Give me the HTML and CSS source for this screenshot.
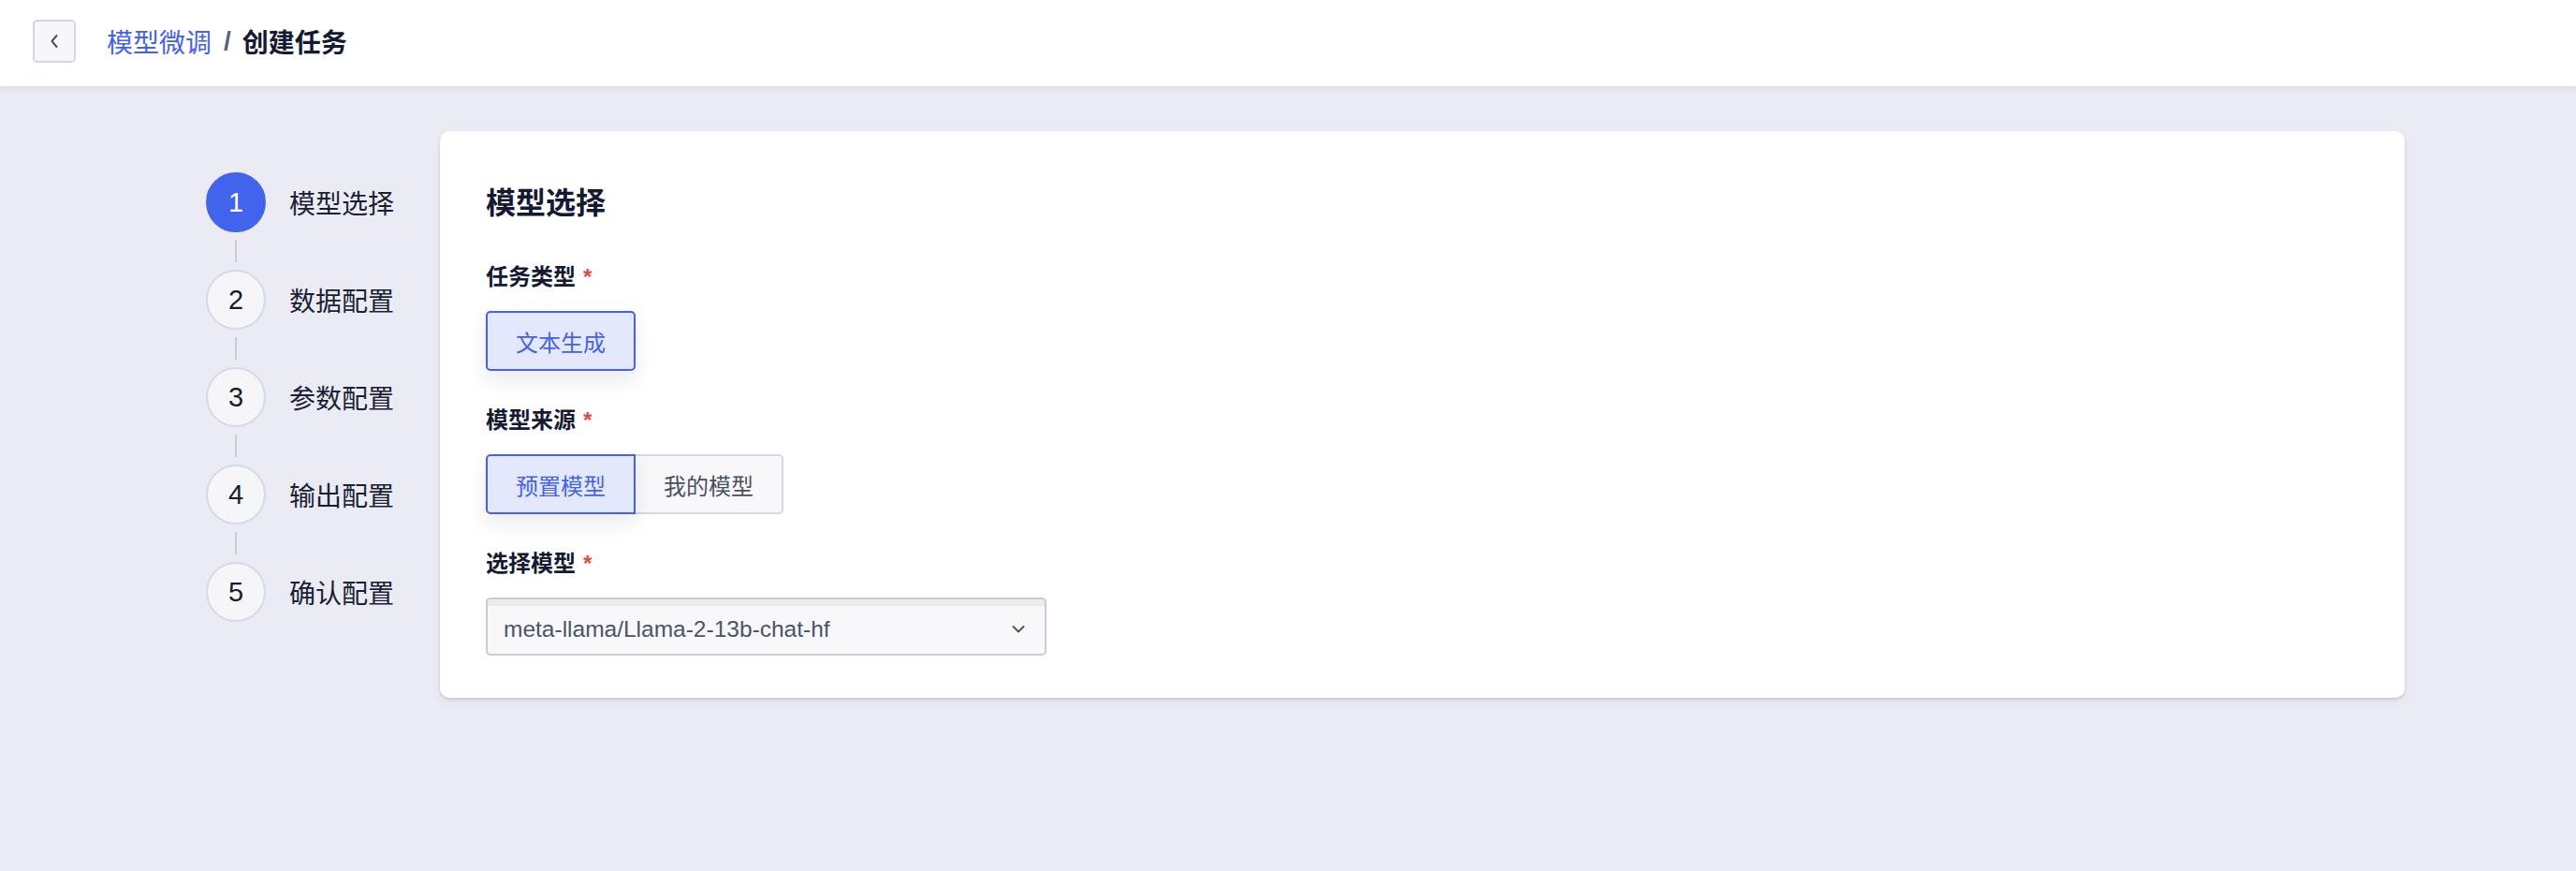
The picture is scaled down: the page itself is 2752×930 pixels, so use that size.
FILE: index.html
```html
<!DOCTYPE html>
<html lang="zh-CN">
<head>
    <meta charset="UTF-8">
    <meta name="viewport" content="width=device-width, initial-scale=1.0">
    <title>创建任务 - 模型微调</title>
    <link rel="stylesheet" href="styles.css">
</head>
<body>
    <div class="header">
        <button class="back-btn" type="button">
            <svg width="10" height="16" viewBox="0 0 10 16">
                <path d="M7.5 2 L2.5 8 L7.5 14" fill="none" stroke="#4b5163" stroke-width="2" stroke-linecap="round" stroke-linejoin="round"/>
            </svg>
        </button>
        <div class="crumbs">
            <span class="crumb-link">模型微调</span>
            <span class="crumb-sep">/</span>
            <span class="crumb-current">创建任务</span>
        </div>
    </div>

    <div class="main">
        <div class="steps">
            <div class="step active">
                <div class="step-num">1</div>
                <div class="step-label">模型选择</div>
            </div>
            <div class="step-line"></div>
            <div class="step">
                <div class="step-num">2</div>
                <div class="step-label">数据配置</div>
            </div>
            <div class="step-line"></div>
            <div class="step">
                <div class="step-num">3</div>
                <div class="step-label">参数配置</div>
            </div>
            <div class="step-line"></div>
            <div class="step">
                <div class="step-num">4</div>
                <div class="step-label">输出配置</div>
            </div>
            <div class="step-line"></div>
            <div class="step">
                <div class="step-num">5</div>
                <div class="step-label">确认配置</div>
            </div>
        </div>

        <div class="card">
            <h2>模型选择</h2>

            <div class="form-item">
                <label>任务类型<span class="req">*</span></label>
                <div class="options">
                    <div class="option selected">文本生成</div>
                </div>
            </div>

            <div class="form-item">
                <label>模型来源<span class="req">*</span></label>
                <div class="options segmented">
                    <div class="option selected">预置模型</div>
                    <div class="option">我的模型</div>
                </div>
            </div>

            <div class="form-item">
                <label>选择模型<span class="req">*</span></label>
                <div class="select">
                    <span>meta-llama/Llama-2-13b-chat-hf</span>
                    <svg width="14" height="10" viewBox="0 0 14 10">
                        <path d="M1.5 2 L7 7.5 L12.5 2" fill="none" stroke="#4b5468" stroke-width="2" stroke-linecap="round" stroke-linejoin="round"/>
                    </svg>
                </div>
            </div>
        </div>
    </div>
</body>
</html>
```

FILE: styles.css
```css
body {
    font-family: "Liberation Sans", "Noto Sans CJK SC", sans-serif;
    margin: 0;
    padding: 0;
    background: #eaebf3;
    color: #161b30;
    height: 100vh;
    overflow: hidden;
}

.header {
    height: 92px;
    box-sizing: border-box;
    padding: 0 35px 4px;
    background: #fff;
    display: flex;
    align-items: center;
    box-shadow: 0 2px 8px rgba(20, 25, 60, 0.08);
    position: relative;
}

.back-btn {
    width: 46px;
    height: 46px;
    padding: 0;
    border: 2px solid #d3d6ea;
    border-radius: 5px;
    background: #f7f7fb;
    display: flex;
    align-items: center;
    justify-content: center;
}

.crumbs {
    margin-left: 33px;
    font-size: 28px;
    display: flex;
    align-items: center;
}

.crumb-link {
    color: #4361ee;
}

.crumb-sep {
    color: #5c6272;
    font-weight: bold;
    margin: 0 12px 0 13px;
}

.crumb-current {
    color: #141a33;
    font-weight: bold;
}

.main {
    display: flex;
    align-items: flex-start;
    padding: 48px 0 0 220px;
}

.steps {
    width: 250px;
    padding-top: 44px;
    display: flex;
    flex-direction: column;
}

.step {
    display: flex;
    align-items: center;
}

.step-num {
    width: 64px;
    height: 64px;
    box-sizing: border-box;
    border-radius: 50%;
    border: 2px solid #d6d9ea;
    background: #f6f6f8;
    display: flex;
    align-items: center;
    justify-content: center;
    font-size: 29px;
    color: #161b30;
}

.step.active .step-num {
    background: #4263eb;
    border-color: #4263eb;
    color: #fff;
}

.step-label {
    margin-left: 25px;
    font-size: 28px;
    color: #1a1f36;
}

.step-line {
    width: 2px;
    height: 24px;
    margin: 8px 0 8px 31px;
    background: #c9ccd8;
}

.card {
    width: 2099px;
    box-sizing: border-box;
    background: #fff;
    border-radius: 10px;
    padding: 53px 49px 45px;
    box-shadow: 0 2px 3px rgba(20, 25, 60, 0.12), 0 4px 12px rgba(20, 25, 60, 0.05);
}

.card h2 {
    margin: 0 0 37px;
    font-size: 32px;
    line-height: 48px;
    font-weight: bold;
    color: #141a33;
}

.form-item {
    margin-bottom: 35px;
}

.form-item:last-child {
    margin-bottom: 0;
}

.form-item label {
    display: block;
    font-size: 24px;
    line-height: 36px;
    font-weight: bold;
    color: #141a33;
    margin-bottom: 18px;
}

.req {
    color: #e5483d;
    margin-left: 8px;
}

.options {
    display: flex;
}

.option {
    width: 160px;
    height: 64px;
    box-sizing: border-box;
    border: 2px solid #d5d8e7;
    border-radius: 5px;
    background: #f8f8fb;
    color: #4b5060;
    font-size: 24px;
    display: flex;
    align-items: center;
    justify-content: center;
}

.option.selected {
    border-color: #4361ee;
    background: #e3e8fd;
    color: #4361ee;
    box-shadow: 0 10px 22px rgba(20, 25, 60, 0.09);
    position: relative;
}

.segmented .option {
    border-radius: 0;
}

.segmented .option:first-child {
    border-radius: 5px 0 0 5px;
}

.segmented .option:last-child {
    border-radius: 0 5px 5px 0;
    border-left: none;
    width: 158px;
}

.select {
    width: 599px;
    height: 62px;
    box-sizing: border-box;
    border: 2px solid #c8ccda;
    border-radius: 5px;
    background: #f8f8fb;
    box-shadow: inset 0 7px 0 #ebebef;
    padding: 5px 21px 0 17px;
    display: flex;
    align-items: center;
    justify-content: space-between;
    font-size: 24.5px;
    color: #4a5468;
}
```
